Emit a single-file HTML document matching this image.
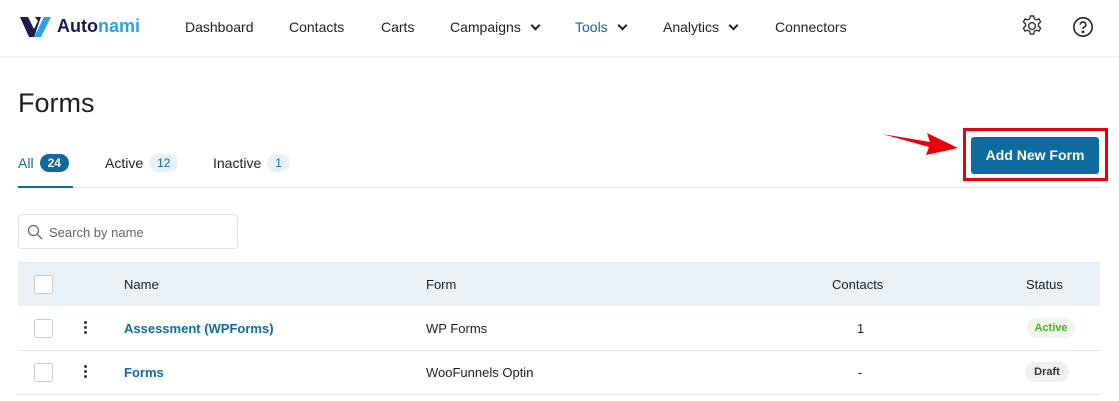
<!DOCTYPE html>
<html><head><meta charset="utf-8"><style>
*{box-sizing:border-box;margin:0;padding:0}
body{width:1119px;height:401px;background:#fff;font-family:"Liberation Sans",Arial,sans-serif;color:#1e1e1e;position:relative;overflow:hidden;font-size:14px}
.abs{position:absolute}
.nav{left:0;top:0;width:1119px;height:58px;border-bottom:2px solid #eef0f2}
.nl{top:19px;font-size:14px;color:#222}
.chev{display:inline-block;width:7px;height:7px;border-right:2px solid #222;border-bottom:2px solid #222;transform:rotate(45deg);margin-left:11px;position:relative;top:-3px}
.badge{display:inline-block;border-radius:10px;font-size:12px;padding:2px 8px;margin-left:6px;position:relative;top:-1px}
.cb{width:19px;height:19px;border:1px solid #ccc;border-radius:3px;background:#fff}
.dots{width:3px}
.dots i{display:block;width:3px;height:3px;border-radius:50%;background:#333;margin-bottom:2px}
</style></head><body>
<div class="abs nav"></div>
<svg class="abs" style="left:20px;top:16px" width="34" height="22" viewBox="0 0 34 22"><path d="M0 1h8l6 12 4-8-3-4h6l-7 20h-5z" fill="#1a1a50"/><path d="M24 1h7L21 21h-7z" fill="#2aa3e6"/></svg>
<div class="abs" style="left:57px;top:16px;font-size:18px;font-weight:bold;color:#1a1a50">Auto<span style="color:#2aa3e6">nami</span></div>
<div class="abs nl" style="left:185px">Dashboard</div>
<div class="abs nl" style="left:289px">Contacts</div>
<div class="abs nl" style="left:381px">Carts</div>
<div class="abs nl" style="left:450px">Campaigns<span class="chev"></span></div>
<div class="abs nl" style="left:575px;color:#0f6aa0">Tools<span class="chev" style="border-color:#222"></span></div>
<div class="abs nl" style="left:663px">Analytics<span class="chev"></span></div>
<div class="abs nl" style="left:775px">Connectors</div>
<svg class="abs" style="left:1020px;top:14px" width="24" height="24" viewBox="0 0 24 24" fill="none" stroke="#333" stroke-width="1.4"><circle cx="12" cy="12" r="3.4"/><path d="M10.3 2h3.4l.5 2.7 2.1 1.2 2.6-1 1.7 3-2.1 1.8v2.6l2.1 1.8-1.7 3-2.6-1-2.1 1.2-.5 2.7h-3.4l-.5-2.7-2.1-1.2-2.6 1-1.7-3 2.1-1.8v-2.6L3.4 7.9l1.7-3 2.6 1 2.1-1.2z"/></svg>
<svg class="abs" style="left:1072px;top:16px" width="22" height="22" viewBox="0 0 24 24" fill="none" stroke="#222" stroke-width="1.7"><circle cx="12" cy="12" r="10"/><path d="M9 9.5a3 3 0 1 1 4 2.8c-.8.4-1 1-1 1.9"/><circle cx="12" cy="17.3" r=".6" fill="#222"/></svg>
<div class="abs" style="left:18px;top:88px;font-size:27px;color:#1e1e1e">Forms</div>
<div class="abs" style="left:18px;top:155px;color:#0f6aa0">All<span class="badge" style="background:#0f6aa0;color:#fff;font-weight:bold">24</span></div>
<div class="abs" style="left:105px;top:155px">Active<span class="badge" style="background:#e6f1f8;color:#0f6aa0">12</span></div>
<div class="abs" style="left:213px;top:155px">Inactive<span class="badge" style="background:#e6f1f8;color:#0f6aa0">1</span></div>
<div class="abs" style="left:18px;top:187px;width:1082px;height:1px;background:#e2e4e7"></div>
<div class="abs" style="left:18px;top:186px;width:55px;height:2px;background:#0f6aa0"></div>
<div class="abs" style="left:963px;top:128px;width:145px;height:53px;border:3px solid #e8000c"></div>
<div class="abs" style="left:971px;top:137px;width:128px;height:37px;background:#0f6aa0;border-radius:3px;color:#fff;font-weight:bold;font-size:14px;text-align:center;line-height:37px">Add New Form</div>
<svg class="abs" style="left:880px;top:128px" width="80" height="30"><path d="M2 6L50 14 47 5 78 20 46 27 49 19z" fill="#e8000c"/></svg>
<div class="abs" style="left:18px;top:214px;width:220px;height:35px;border:1px solid #dfe1e4;border-radius:4px"></div>
<svg class="abs" style="left:27px;top:224px" width="16" height="16" viewBox="0 0 16 16" fill="none" stroke="#666" stroke-width="1.3"><circle cx="6.5" cy="6.5" r="5"/><path d="M10.2 10.2L15 15"/></svg>
<div class="abs" style="left:49px;top:225px;color:#666;font-size:13px">Search by name</div>
<div class="abs" style="left:18px;top:262px;width:1082px;height:44px;background:#eaf1f6;border-top:1px solid #e2e6ea"></div>
<div class="abs cb" style="left:34px;top:275px"></div>
<div class="abs" style="left:124px;top:277px;font-size:13px">Name</div>
<div class="abs" style="left:426px;top:277px;font-size:13px">Form</div>
<div class="abs" style="left:832px;top:277px;font-size:13px">Contacts</div>
<div class="abs" style="left:1026px;top:277px;font-size:13px">Status</div>
<div class="abs" style="left:18px;top:350px;width:1082px;height:1px;background:#e2e4e7"></div>
<div class="abs" style="left:18px;top:394px;width:1082px;height:1px;background:#e2e4e7"></div>
<div class="abs cb" style="left:34px;top:319px"></div>
<div class="abs dots" style="left:84px;top:321px"><i></i><i></i><i></i></div>
<div class="abs" style="left:124px;top:321px;font-size:13px;font-weight:bold;color:#0f6aa0">Assessment (WPForms)</div>
<div class="abs" style="left:426px;top:321px;font-size:13px">WP Forms</div>
<div class="abs" style="left:857px;top:321px;font-size:13px">1</div>
<div class="abs" style="left:1027px;top:318px;width:48px;height:20px;border-radius:10px;background:#eef8ea;color:#4caf2a;font-size:11px;font-weight:bold;text-align:center;line-height:20px">Active</div>
<div class="abs cb" style="left:34px;top:363px"></div>
<div class="abs dots" style="left:84px;top:365px"><i></i><i></i><i></i></div>
<div class="abs" style="left:124px;top:365px;font-size:13px;font-weight:bold;color:#0f6aa0">Forms</div>
<div class="abs" style="left:426px;top:365px;font-size:13px">WooFunnels Optin</div>
<div class="abs" style="left:858px;top:365px;font-size:13px">-</div>
<div class="abs" style="left:1025px;top:362px;width:44px;height:20px;border-radius:10px;background:#eff0f2;color:#333;font-size:11px;font-weight:bold;text-align:center;line-height:20px">Draft</div>
</body></html>
